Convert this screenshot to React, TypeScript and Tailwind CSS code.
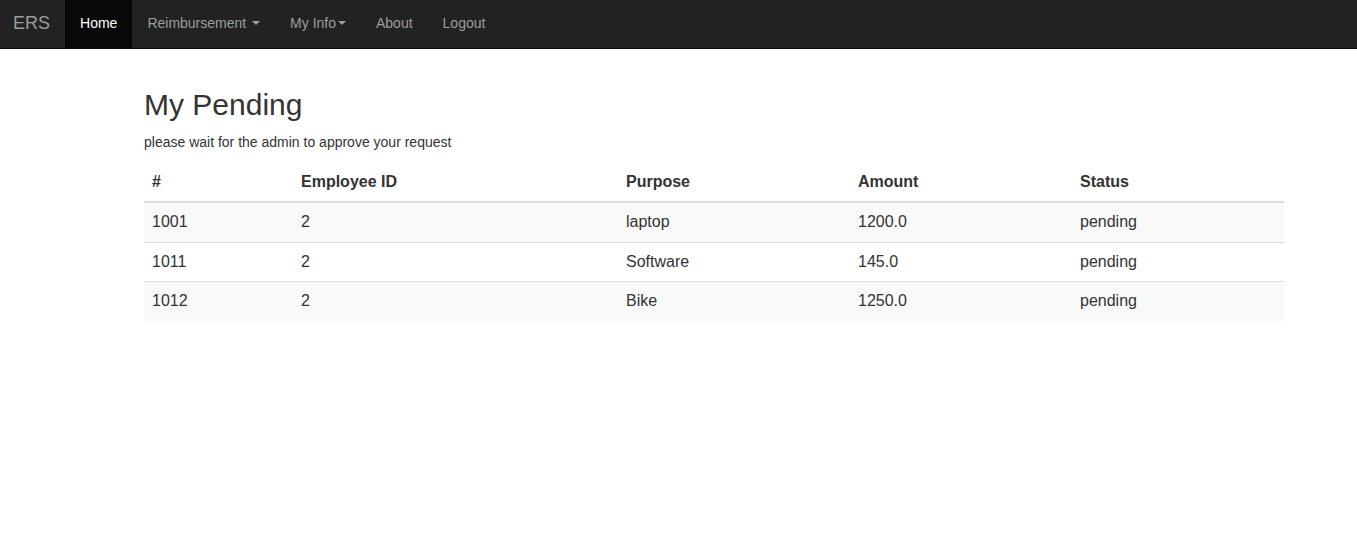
import React from "react";

const rows = [
  { id: "1001", emp: "2", purpose: "laptop", amount: "1200.0", status: "pending" },
  { id: "1011", emp: "2", purpose: "Software", amount: "145.0", status: "pending" },
  { id: "1012", emp: "2", purpose: "Bike", amount: "1250.0", status: "pending" },
];

function Caret() {
  return (
    <span className="inline-block w-0 h-0 ml-[2px] align-middle border-t-[4px] border-t-[#9d9d9d] border-x-[4px] border-x-transparent" />
  );
}

export default function App() {
  return (
    <div className="min-h-[554px] bg-white font-['Liberation_Sans',Arial,sans-serif] text-[14px] text-[#333]">
      <nav className="h-[49px] bg-[#222] border-b border-[#080808] flex items-stretch">
        <a className="flex items-center pl-[13px] pr-[15px] pb-[2px] text-[18px] text-[#9d9d9d] h-12">ERS</a>
        <a className="flex items-center px-[15px] pb-[2px] h-12 bg-[#080808] text-white">Home</a>
        <a className="flex items-center px-[15px] pb-[2px] h-12 text-[#9d9d9d] whitespace-pre">
          Reimbursement <Caret />
        </a>
        <a className="flex items-center px-[15px] pb-[2px] h-12 text-[#9d9d9d]">
          My Info<Caret />
        </a>
        <a className="flex items-center px-[15px] pb-[2px] h-12 text-[#9d9d9d]">About</a>
        <a className="flex items-center px-[15px] pb-[2px] h-12 text-[#9d9d9d]">Logout</a>
      </nav>
      <div className="pl-[144px] pt-[19px]">
        <div className="w-[1140px]">
          <h2 className="mt-[20px] mb-[11px] text-[30px] leading-[33px] font-normal text-[#333]">My Pending</h2>
          <p className="mb-[11px] leading-[20px]">please wait for the admin to approve your request</p>
          <table className="w-full border-collapse text-[16px] leading-[22.5px]">
            <thead>
              <tr>
                <th className="w-[149px] text-left font-bold p-[8px] leading-[22px] border-b-2 border-[#ddd]">#</th>
                <th className="w-[325px] text-left font-bold p-[8px] leading-[22px] border-b-2 border-[#ddd]">Employee ID</th>
                <th className="w-[232px] text-left font-bold p-[8px] leading-[22px] border-b-2 border-[#ddd]">Purpose</th>
                <th className="w-[222px] text-left font-bold p-[8px] leading-[22px] border-b-2 border-[#ddd]">Amount</th>
                <th className="text-left font-bold p-[8px] leading-[22px] border-b-2 border-[#ddd]">Status</th>
              </tr>
            </thead>
            <tbody>
              {rows.map((r, i) => (
                <tr key={r.id} className={i % 2 === 0 ? "bg-[#f9f9f9]" : ""}>
                  <td className={`p-[8px] ${i > 0 ? "border-t border-[#ddd]" : ""}`}>{r.id}</td>
                  <td className={`p-[8px] ${i > 0 ? "border-t border-[#ddd]" : ""}`}>{r.emp}</td>
                  <td className={`p-[8px] ${i > 0 ? "border-t border-[#ddd]" : ""}`}>{r.purpose}</td>
                  <td className={`p-[8px] ${i > 0 ? "border-t border-[#ddd]" : ""}`}>{r.amount}</td>
                  <td className={`p-[8px] ${i > 0 ? "border-t border-[#ddd]" : ""}`}>{r.status}</td>
                </tr>
              ))}
            </tbody>
          </table>
        </div>
      </div>
    </div>
  );
}
